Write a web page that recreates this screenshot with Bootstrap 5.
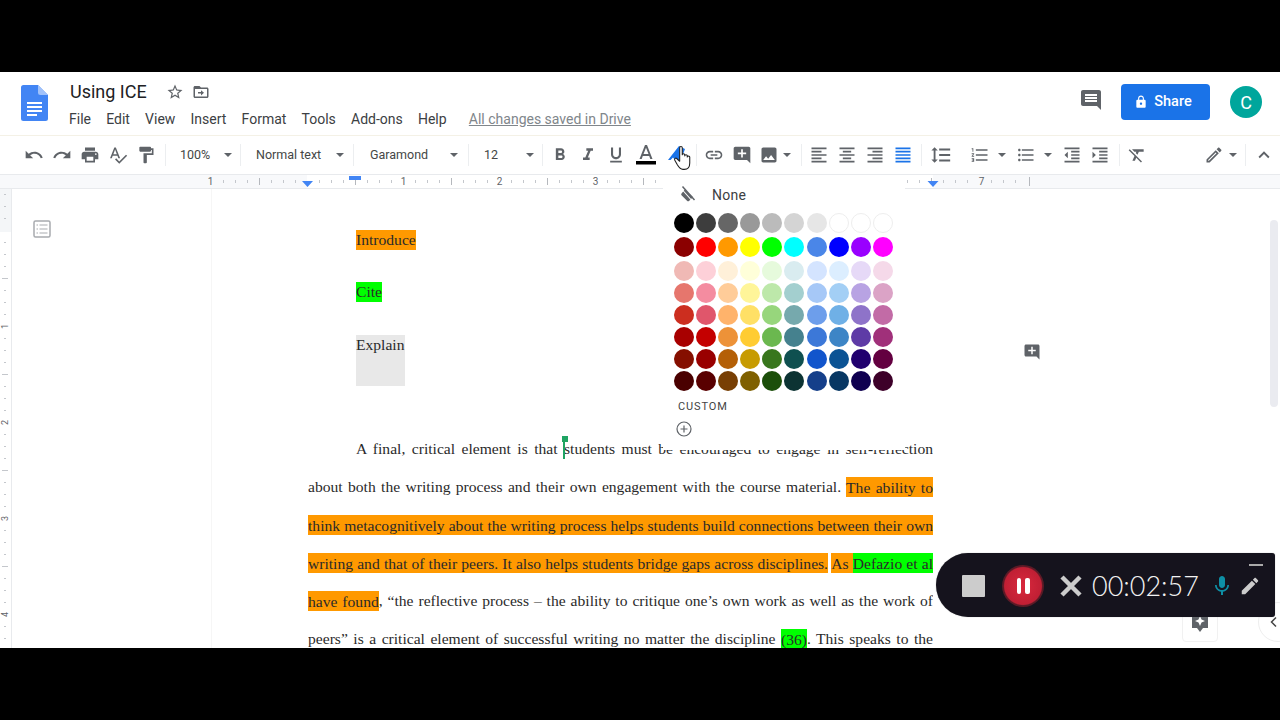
<!DOCTYPE html>
<html lang="en">
<head>
<meta charset="utf-8">
<title>Using ICE</title>
<link href="https://cdn.jsdelivr.net/npm/bootstrap@5.3.0/dist/css/bootstrap.min.css" rel="stylesheet">
<style>
html,body{height:720px;overflow:hidden;background:#000}
body{font-family:Roboto,"Liberation Sans",sans-serif;color:#3c4043}
.barblack{height:72px;background:#000}
.app{height:576px;background:#fff;overflow:hidden;position:relative}
.hdr{height:63px}
.logo-slot{width:69px;padding-left:21px;padding-top:13px}
.doc-title{font-size:18px;line-height:22px;color:#202124;margin-top:9px;padding-left:1px}
.title-ic{margin-left:19px;gap:8px}
.menu-row{margin-top:6px;font-size:14px;line-height:20px;gap:15.2px;color:#3c4043}
.saved{color:#80868b;text-decoration:underline;margin-left:7px}
.hdr-right{padding-right:18px;padding-top:12px}
.share-btn{width:89px;height:36px;background:#1a73e8;border:0;border-radius:4px;color:#fff;font-size:14.5px;font-weight:500;margin:0 20px 0 18px;padding:0 5px 0 0;gap:6px}
.share-btn:hover{background:#1a73e8}
.avatar-c{width:32px;height:32px;background:#00a69c;color:#fff;font-size:18px;margin-top:2px}
.tools{height:40px;padding-left:20px;padding-right:2px;border-top:1px solid #f4f1e6;border-bottom:1px solid #e8eaed;font-size:12.5px;color:#444746}
.slot{width:28px;height:28px}
.sl26{width:26px}.sl10{width:10px}.sl16{width:16px}
.tsep{width:1px;height:22px;background:#eceef0}
.ml1{margin-left:1px}.ml2{margin-left:2px}.ml3{margin-left:3px}.ml4{margin-left:4px}.ml5{margin-left:5px}.ml7{margin-left:7px}.ml9{margin-left:9px}.ml11{margin-left:11px}
.tsel{height:28px}
.ts74{width:74px;padding:0 8px 0 14px}
.ts112{width:112px;padding:0 9px 0 15px}
.ts114{width:114px;padding:0 10px 0 16px}
.ts73{width:73px;padding:0 8px 0 15px}
.caret-d{width:0;height:0;border-left:4px solid transparent;border-right:4px solid transparent;border-top:4px solid #5f6368}
.rule-h{height:14px;background:#f8f9fb;border-bottom:1px solid #e8eaed}
.rule-h svg,.rule-v svg{display:block}
.work{height:459px}
.rule-v{width:12px;border-right:1px solid #e8eaed}
.side{width:199px;padding:31px 0 0 21px}
.page{width:820px;border-left:1px solid #f6f6f6;padding:25px 0 0 96px;font-family:"Liberation Serif",serif;color:#2a2a2a;font-size:15.6px}
.page-in{width:625px}
.shortl{height:52px;padding-left:48px;padding-top:16px;line-height:20px}
.exl{height:69px;padding-top:17px;margin-bottom:43px}
.hi-o{background:#f90}
.hi-g{background:#0f0}
.hi-o,.hi-g{padding:1.5px 0}
.shortl .hi-o,.shortl .hi-g{display:inline-block;padding:0;height:20px;width:auto}
.hi-w{display:inline-block;width:49px;height:51px;background:#e8e8e8;vertical-align:top}
.jline{line-height:38px;height:38px;text-align:justify;text-align-last:justify;overflow:hidden}
.jind{padding-left:48px}
.scrollthumb{position:absolute;left:1270px;top:148px;width:8px;height:187px;background:#eaebf0;border-radius:4px}
.txt-cur{position:absolute;left:563px;top:370px;width:2px;height:17px;background:#1fa463}
.txt-cur::before{content:"";position:absolute;left:-1px;top:-6px;width:6px;height:6px;background:#1fa463}
.pop{position:absolute;left:663px;top:103px;width:242px;height:275px;background:#fff;padding:0 0 0 11px;font-size:14px;color:#3c4043}
.none-row{height:38px;padding-left:4px}
.none-t{margin-left:16px;letter-spacing:.3px;padding-top:2px}
.swgrid{display:grid;grid-template-columns:repeat(10,22.1px);grid-template-rows:24px 24px repeat(6,22.1px)}
.sw{width:20px;height:20px;border-radius:50%;display:block}
.cust{font-size:11px;letter-spacing:.9px;line-height:16px;margin:5px 0 5px 4px;color:#444}
.hand{position:absolute;left:673px;top:73px}
.addc{position:absolute;left:1023px;top:271px}
.explore-b{position:absolute;left:1182px;top:530px;width:36px;height:40px;background:#fff;border:1px solid #f1f1f1;border-radius:0 0 4px 4px;padding-bottom:7px}
.sidechev{position:absolute;left:1258px;top:530px;width:40px;height:40px;border:1px solid #eee;border-radius:50%;background:#fff;padding-left:10px}
.recbar{position:absolute;left:936px;top:481px;width:339px;height:64px;background:#15131d;border-radius:32px 3px 3px 32px;box-shadow:0 0 1px #999;padding-top:2px}
.rstop{width:23px;height:22px;background:#ccc;border-radius:1px;margin-left:26px}
.rpause{width:42px;height:42px;margin-left:17px;background:radial-gradient(circle,#d9283d 0,#c01f34 62%,#5d1a26 66%,#3a1520 100%);gap:4px}
.rbarp{width:4.5px;height:16px;background:#fff;border-radius:2px;display:block}
.rtime{font-family:Lato,Roboto,sans-serif;font-weight:300;font-size:27px;color:#f2f2f2;line-height:60px;margin-left:9px;width:108px;white-space:nowrap}
.rmin{position:absolute;left:313px;top:11px;width:14px;height:1.5px;background:#aaa}
.rx{margin-left:15px}
.rmic{margin-left:10px}
.rpen{margin-left:5px}
</style>
</head>
<body>
<div class="barblack"></div>
<div class="app">
  <div class="hdr d-flex">
    <div class="logo-slot">
      <svg width="27" height="36" viewBox="0 0 27 36"><path fill="#4285f4" d="M2.500 0H17l10 10v23.500A2.500 2.500 0 0 1 24.500 36h-22A2.500 2.500 0 0 1 0 33.500v-31A2.500 2.500 0 0 1 2.500 0z"/><path fill="#a1c2fa" d="M17 0l10 10h-7.500A2.500 2.500 0 0 1 17 7.500z"/><path fill="#fff" d="M6 17h15v2H6zM6 21h15v2H6zM6 25h15v2H6zM6 29h10v2H6z"/></svg>
    </div>
    <div class="flex-grow-1">
      <div class="doc-title d-flex align-items-center">
        <span>Using ICE</span>
        <span class="title-ic d-flex align-items-center">
          <svg width="18" height="18" viewBox="0 0 24 24" fill="#5f6368"><path d="M22 9.240l-7.190-.620L12 2 9.190 8.630 2 9.240l5.460 4.730L5.820 21 12 17.270 18.180 21l-1.630-7.030L22 9.240zM12 15.400l-3.760 2.270 1-4.280-3.320-2.880 4.380-.380L12 6.100l1.710 4.040 4.380.380-3.320 2.880 1 4.280L12 15.400z"/></svg>
          <svg width="18" height="18" viewBox="0 0 24 24" fill="#5f6368"><path d="M20 6h-8l-2-2H4c-1.100 0-1.990.9-1.990 2L2 18c0 1.100.9 2 2 2h16c1.100 0 2-.9 2-2V8c0-1.100-.9-2-2-2zm0 12H4V8h16v10z"/><path d="M12 9.500v2.500H8v2h4v2.500l4-3.500z"/></svg>
        </span>
      </div>
      <div class="menu-row d-flex">
        <span>File</span><span>Edit</span><span>View</span><span>Insert</span><span>Format</span><span>Tools</span><span>Add-ons</span><span>Help</span><span class="saved">All changes saved in Drive</span>
      </div>
    </div>
    <div class="hdr-right d-flex align-items-start">
      <svg class="mt-1" width="24" height="24" viewBox="0 0 24 24" fill="#5f6368"><path d="M21.990 4c0-1.100-.89-2-1.990-2H4c-1.100 0-2 .9-2 2v12c0 1.100.9 2 2 2h14l4 4-.01-18zM18 14H6v-2h12v2zm0-3H6V9h12v2zm0-3H6V6h12v2z"/></svg>
      <button class="btn share-btn d-flex align-items-center justify-content-center">
        <svg width="14" height="14" viewBox="0 0 24 24" fill="#fff"><path d="M18 8h-1V6c0-2.760-2.240-5-5-5S7 3.240 7 6v2H6c-1.100 0-2 .9-2 2v10c0 1.100.9 2 2 2h12c1.100 0 2-.9 2-2V10c0-1.100-.9-2-2-2zm-6 9c-1.100 0-2-.9-2-2s.9-2 2-2 2 .9 2 2-.9 2-2 2zm3.100-9H8.900V6c0-1.710 1.390-3.100 3.100-3.100 1.710 0 3.100 1.390 3.100 3.100v2z"/></svg>
        <span>Share</span>
      </button>
      <div class="avatar-c rounded-circle d-flex align-items-center justify-content-center">C</div>
    </div>
  </div>

  <div class="tools d-flex align-items-center">
    <span class="slot d-flex align-items-center justify-content-center"><svg width="20" height="20" viewBox="0 0 24 24" fill="#5f6368"><path d="M12.500 8c-2.650 0-5.050.99-6.900 2.600L2 7v9h9l-3.620-3.620c1.390-1.160 3.160-1.880 5.120-1.880 3.540 0 6.550 2.310 7.600 5.500l2.370-.78C21.080 11.030 17.150 8 12.500 8z"/></svg></span>
    <span class="slot d-flex align-items-center justify-content-center"><svg width="20" height="20" viewBox="0 0 24 24" fill="#5f6368"><path d="M18.400 10.600C16.550 8.990 14.150 8 11.500 8c-4.650 0-8.580 3.030-9.960 7.220L3.900 16c1.050-3.190 4.050-5.500 7.600-5.500 1.950 0 3.730.72 5.120 1.880L13 16h9V7l-3.600 3.600z"/></svg></span>
    <span class="slot d-flex align-items-center justify-content-center"><svg width="20" height="20" viewBox="0 0 24 24" fill="#5f6368"><path d="M19 8H5c-1.660 0-3 1.340-3 3v6h4v4h12v-4h4v-6c0-1.660-1.340-3-3-3zm-3 11H8v-5h8v5zm3-7c-.55 0-1-.45-1-1s.45-1 1-1 1 .45 1 1-.45 1-1 1zm-1-9H6v4h12V3z"/></svg></span>
    <span class="slot d-flex align-items-center justify-content-center"><svg width="20" height="20" viewBox="0 0 24 24" fill="#5f6368"><path d="M12.450 16h2.090L9.430 3H7.570L2.460 16h2.090l1.120-3h5.640l1.140 3zm-6.020-5L8.500 5.480 10.570 11H6.430zm15.160.59l-8.090 8.090L9.830 16l-1.410 1.410 5.090 5.090L23 13l-1.410-1.410z"/></svg></span>
    <span class="slot d-flex align-items-center justify-content-center"><svg width="20" height="20" viewBox="0 0 24 24" fill="#5f6368"><path d="M18 4V3c0-.55-.45-1-1-1H5c-.55 0-1 .45-1 1v4c0 .55.45 1 1 1h12c.55 0 1-.45 1-1V6h1v4H9v11c0 .55.45 1 1 1h2c.55 0 1-.45 1-1v-9h8V4h-3z"/></svg></span>
    <span class="tsep ml5"></span>
    <span class="tsel ts74 d-flex align-items-center justify-content-between"><span>100%</span><i class="caret-d"></i></span>
    <span class="tsep"></span>
    <span class="tsel ts112 d-flex align-items-center justify-content-between"><span>Normal text</span><i class="caret-d"></i></span>
    <span class="tsep"></span>
    <span class="tsel ts114 d-flex align-items-center justify-content-between"><span>Garamond</span><i class="caret-d"></i></span>
    <span class="tsep"></span>
    <span class="tsel ts73 d-flex align-items-center justify-content-between"><span>12</span><i class="caret-d"></i></span>
    <span class="tsep"></span>
    <span class="slot ml3 d-flex align-items-center justify-content-center"><svg width="20" height="20" viewBox="0 0 24 24" fill="#5f6368"><path d="M15.600 10.790c.97-.67 1.650-1.770 1.650-2.790 0-2.260-1.750-4-4-4H7v14h7.040c2.090 0 3.710-1.700 3.710-3.790 0-1.520-.86-2.820-2.150-3.420zM10 6.500h3c.83 0 1.500.67 1.500 1.500s-.67 1.500-1.500 1.500h-3v-3zm3.500 9H10v-3h3.500c.83 0 1.500.67 1.500 1.500s-.67 1.500-1.500 1.500z"/></svg></span>
    <span class="slot d-flex align-items-center justify-content-center"><svg width="20" height="20" viewBox="0 0 24 24" fill="#5f6368"><path d="M10 4v3h2.210l-3.420 8H6v3h8v-3h-2.210l3.420-8H18V4z"/></svg></span>
    <span class="slot d-flex align-items-center justify-content-center"><svg width="20" height="20" viewBox="0 0 24 24" fill="#5f6368"><path d="M12 17c3.310 0 6-2.690 6-6V3h-2.500v8c0 1.930-1.570 3.500-3.500 3.500S8.500 12.930 8.500 11V3H6v8c0 3.310 2.690 6 6 6zm-7 2v2h14v-2H5z"/></svg></span>
    <span class="slot ml2 d-flex align-items-center justify-content-center"><svg width="24" height="24" viewBox="0 0 24 24"><path fill="#5f6368" d="M11 2h2l5.500 14h-2.200l-1.100-3H8.800l-1.100 3H5.500L11 2zm1 2.800L9.500 11h5L12 4.800z"/><rect x="2" y="18" width="20" height="3.500" fill="#000"/></svg></span>
    <span class="slot ml4 d-flex align-items-center justify-content-center"><svg width="24" height="24" viewBox="0 0 24 24" fill="#1a73e8"><path d="M2 17L13 3l6 3-4 11H9l-2-2.500L4.500 17z"/></svg></span>
    <span class="tsep ml4"></span>
    <span class="slot ml3 d-flex align-items-center justify-content-center"><svg width="20" height="20" viewBox="0 0 24 24" fill="#5f6368"><path d="M3.900 12c0-1.710 1.390-3.100 3.100-3.100h4V7H7c-2.760 0-5 2.240-5 5s2.240 5 5 5h4v-1.900H7c-1.710 0-3.100-1.390-3.100-3.100zM8 13h8v-2H8v2zm9-6h-4v1.900h4c1.710 0 3.100 1.390 3.100 3.100s-1.390 3.100-3.100 3.100h-4V17h4c2.760 0 5-2.240 5-5s-2.240-5-5-5z"/></svg></span>
    <span class="slot d-flex align-items-center justify-content-center"><svg width="20" height="20" viewBox="0 0 24 24" fill="#5f6368"><path d="M21.990 4c0-1.100-.89-2-1.990-2H4c-1.100 0-2 .9-2 2v12c0 1.100.9 2 2 2h14l4 4-.01-18zM17 11h-4v4h-2v-4H7V9h4V5h2v4h4v2z"/></svg></span>
    <span class="slot sl26 d-flex align-items-center justify-content-center"><svg width="20" height="20" viewBox="0 0 24 24" fill="#5f6368"><path d="M21 19V5c0-1.100-.9-2-2-2H5c-1.100 0-2 .9-2 2v14c0 1.100.9 2 2 2h14c1.100 0 2-.9 2-2zM8.500 13.500l2.500 3.010L14.500 12l4.500 6H5l3.500-4.500z"/></svg></span>
    <span class="slot sl10 d-flex align-items-center justify-content-center"><i class="caret-d"></i></span>
    <span class="tsep ml9"></span>
    <span class="slot ml3 d-flex align-items-center justify-content-center"><svg width="20" height="20" viewBox="0 0 24 24" fill="#5f6368"><path d="M15 15H3v2h12v-2zm0-8H3v2h12V7zM3 13h18v-2H3v2zm0 8h18v-2H3v2zM3 3v2h18V3H3z"/></svg></span>
    <span class="slot d-flex align-items-center justify-content-center"><svg width="20" height="20" viewBox="0 0 24 24" fill="#5f6368"><path d="M7 15v2h10v-2H7zm-4 6h18v-2H3v2zm0-8h18v-2H3v2zm4-6v2h10V7H7zM3 3v2h18V3H3z"/></svg></span>
    <span class="slot d-flex align-items-center justify-content-center"><svg width="20" height="20" viewBox="0 0 24 24" fill="#5f6368"><path d="M3 21h18v-2H3v2zm6-4h12v-2H9v2zm-6-4h18v-2H3v2zm6-4h12V7H9v2zM3 3v2h18V3H3z"/></svg></span>
    <span class="slot d-flex align-items-center justify-content-center"><svg width="20" height="20" viewBox="0 0 24 24" fill="#1a73e8"><path d="M3 21h18v-2H3v2zm0-4h18v-2H3v2zm0-4h18v-2H3v2zm0-4h18V7H3v2zm0-6v2h18V3H3z"/></svg></span>
    <span class="tsep ml4"></span>
    <span class="slot ml5 d-flex align-items-center justify-content-center"><svg width="22" height="22" viewBox="0 0 24 24" fill="#5f6368"><path d="M6 7h2.500L5 3.500 1.500 7H4v10H1.500L5 20.500 8.500 17H6V7zm4-2v2h12V5H10zm0 14h12v-2H10v2zm0-6h12v-2H10v2z"/></svg></span>
    <span class="slot ml11 d-flex align-items-center justify-content-center"><svg width="20" height="20" viewBox="0 0 24 24" fill="#5f6368"><path d="M2 17h2v.5H3v1h1v.5H2v1h3v-4H2v1zm1-9h1V4H2v1h1v3zm-1 3h1.800L2 13.100v.9h3v-1H3.200L5 10.900V10H2v1zm5-6v2h14V5H7zm0 14h14v-2H7v2zm0-6h14v-2H7v2z"/></svg></span>
    <span class="slot sl16 d-flex align-items-center justify-content-center"><i class="caret-d"></i></span>
    <span class="slot ml2 d-flex align-items-center justify-content-center"><svg width="20" height="20" viewBox="0 0 24 24" fill="#5f6368"><path d="M4 10.500c-.83 0-1.500.67-1.500 1.500s.67 1.500 1.500 1.500 1.500-.67 1.500-1.500-.67-1.500-1.500-1.500zm0-6c-.83 0-1.500.67-1.500 1.500S3.170 7.500 4 7.500 5.500 6.830 5.500 6 4.830 4.500 4 4.500zm0 12c-.83 0-1.500.68-1.500 1.500s.68 1.500 1.500 1.500 1.500-.68 1.500-1.500-.67-1.500-1.500-1.500zM7 19h14v-2H7v2zm0-6h14v-2H7v2zm0-8v2h14V5H7z"/></svg></span>
    <span class="slot sl16 d-flex align-items-center justify-content-center"><i class="caret-d"></i></span>
    <span class="slot ml2 d-flex align-items-center justify-content-center"><svg width="20" height="20" viewBox="0 0 24 24" fill="#5f6368"><path d="M11 17h10v-2H11v2zm-8-5l4 4V8l-4 4zm0 9h18v-2H3v2zM3 3v2h18V3H3zm8 6h10V7H11v2zm0 4h10v-2H11v2z"/></svg></span>
    <span class="slot d-flex align-items-center justify-content-center"><svg width="20" height="20" viewBox="0 0 24 24" fill="#5f6368"><path d="M3 21h18v-2H3v2zM3 8v8l4-4-4-4zm8 9h10v-2H11v2zM3 3v2h18V3H3zm8 6h10V7H11v2zm0 4h10v-2H11v2z"/></svg></span>
    <span class="tsep ml5"></span>
    <span class="slot ml3 d-flex align-items-center justify-content-center"><svg width="20" height="20" viewBox="0 0 24 24" fill="#5f6368"><path d="M3.270 5L2 6.270l6.970 6.970L6.500 19h3l1.570-3.660L16.730 21 18 19.730 3.550 5.270 3.270 5zM6 5v.18L8.820 8h2.400l-.72 1.680 2.100 2.100L14.210 8H20V5H6z"/></svg></span>
    <span class="slot ms-auto d-flex align-items-center justify-content-center"><svg width="20" height="20" viewBox="0 0 24 24" fill="#5f6368"><path d="M3 17.250V21h3.750L17.810 9.940l-3.750-3.750L3 17.250zM5.920 19H5v-.92l9.060-9.060.92.92L5.920 19zM20.710 7.040c.39-.39.39-1.020 0-1.410l-2.340-2.340c-.39-.39-1.020-.39-1.410 0l-1.830 1.830 3.750 3.750 1.830-1.830z"/></svg></span>
    <span class="slot sl10 d-flex align-items-center justify-content-center"><i class="caret-d"></i></span>
    <span class="tsep ml7"></span>
    <span class="slot ml4 d-flex align-items-center justify-content-center"><svg width="22" height="22" viewBox="0 0 24 24" fill="#5f6368"><path d="M7.410 15.410L12 10.830l4.590 4.580L18 14l-6-6-6 6z"/></svg></span>
  </div>

  <div class="rule-h">
    <svg width="1280" height="13" viewBox="0 0 1280 13">
      <defs><pattern id="tk" x="211" y="0" width="96" height="13" patternUnits="userSpaceOnUse"><path stroke="#c4c7cc" d="M12.500 5v3M24.500 5v3M36.500 5v3M60.500 5v3M72.500 5v3M84.500 5v3"/><path stroke="#b5b8bd" d="M48.500 3v7"/></pattern></defs>
      <rect x="307" y="0" width="626" height="13" fill="#fff"/>
      <rect x="212" y="0" width="810" height="13" fill="url(#tk)"/>
      <path stroke="#b5b8bd" d="M1029.500 2v9"/>
      <g font-family="Roboto,sans-serif" font-size="10" fill="#5f6368" text-anchor="middle"><text x="210.500" y="10">1</text><text x="403.500" y="10">1</text><text x="499.500" y="10">2</text><text x="595.500" y="10">3</text><text x="981.500" y="10">7</text></g>
      <path fill="#4285f4" d="M302 6h11l-5.500 6zM349 1h12v4h-12zM927.500 6h11l-5.500 6z"/>
    </svg>
  </div>

  <div class="work d-flex">
    <div class="rule-v">
      <svg width="11" height="459" viewBox="0 0 11 459">
        <rect width="11" height="43" fill="#f4f6f8"/>
        <path stroke="#c4c7cc" d="M4 5.500h2M4 17.500h2M4 29.500h2M4 53.500h2M4 65.500h2M4 77.500h2M2 89.500h6M4 101.500h2M4 113.500h2M4 125.500h2M4 149.500h2M4 161.500h2M4 173.500h2M2 185.500h6M4 197.500h2M4 209.500h2M4 221.500h2M4 245.500h2M4 257.500h2M4 269.500h2M2 281.500h6M4 293.500h2M4 305.500h2M4 317.500h2M4 341.500h2M4 353.500h2M4 365.500h2M2 377.500h6M4 389.500h2M4 401.500h2M4 413.500h2M4 437.500h2M4 449.500h2"/>
        <g font-family="Roboto,sans-serif" font-size="9" fill="#5f6368" text-anchor="middle"><text transform="translate(8 137.500) rotate(-90)">1</text><text transform="translate(8 233.500) rotate(-90)">2</text><text transform="translate(8 329.500) rotate(-90)">3</text><text transform="translate(8 425.500) rotate(-90)">4</text></g>
      </svg>
    </div>
    <div class="side">
      <svg class="d-block" width="18" height="18" viewBox="0 0 18 18" fill="none" stroke="#a8abaf"><rect x="1" y="1" width="16" height="16" rx="1.500" stroke-width="1.500"/><path d="M6.500 5h8M6.500 9h8M6.500 13h8M3.500 5h1.500M3.500 9h1.500M3.500 13h1.500"/></svg>
    </div>
    <div class="page">
      <div class="page-in">
        <div class="shortl"><span class="hi-o">Introduce</span></div>
        <div class="shortl"><span class="hi-g">Cite</span></div>
        <div class="shortl exl"><span class="hi-w">Explain</span></div>
        <div class="jline jind">A final, critical element is that students must be encouraged to engage in self-reflection</div>
        <div class="jline">about both the writing process and their own engagement with the course material. <span class="hi-o">The ability to</span></div>
        <div class="jline"><span class="hi-o">think metacognitively about the writing process helps students build connections between their own</span></div>
        <div class="jline"><span class="hi-o">writing and that of their peers. It also helps students bridge gaps across disciplines.</span> <span class="hi-o">As </span><span class="hi-g">Defazio et al</span></div>
        <div class="jline"><span class="hi-o">have found</span>, “the reflective process – the ability to critique one’s own work as well as the work of</div>
        <div class="jline">peers” is a critical element of successful writing no matter the discipline <span class="hi-g">(36)</span>. This speaks to the</div>
      </div>
    </div>
  </div>

  <div class="scrollthumb"></div>
  <div class="txt-cur"></div>

  <div class="pop">
    <div class="none-row d-flex align-items-center">
      <svg width="18" height="18" viewBox="0 0 24 24"><path fill="#5f6368" d="M9 6l11 10-5 5c-1 1-2 1-3 0l-7-7c-1-1-1-2 0-3z"/><path stroke="#5f6368" stroke-width="2" d="M6 2l16 18"/><path stroke="#fff" stroke-width="1.500" d="M4.500 5l16 18"/></svg>
      <span class="none-t">None</span>
    </div>
    <div class="swgrid">
      <i class="sw sa0"></i><i class="sw sa1"></i><i class="sw sa2"></i><i class="sw sa3"></i><i class="sw sa4"></i><i class="sw sa5"></i><i class="sw sa6"></i><i class="sw sa7"></i><i class="sw sa7"></i><i class="sw sa7"></i>
      <i class="sw sb0"></i><i class="sw sb1"></i><i class="sw sb2"></i><i class="sw sb3"></i><i class="sw sb4"></i><i class="sw sb5"></i><i class="sw sb6"></i><i class="sw sb7"></i><i class="sw sb8"></i><i class="sw sb9"></i>
      <i class="sw sc0"></i><i class="sw sc1"></i><i class="sw sc2"></i><i class="sw sc3"></i><i class="sw sc4"></i><i class="sw sc5"></i><i class="sw sc6"></i><i class="sw sc7"></i><i class="sw sc8"></i><i class="sw sc9"></i>
      <i class="sw sd0"></i><i class="sw sd1"></i><i class="sw sd2"></i><i class="sw sd3"></i><i class="sw sd4"></i><i class="sw sd5"></i><i class="sw sd6"></i><i class="sw sd7"></i><i class="sw sd8"></i><i class="sw sd9"></i>
      <i class="sw se0"></i><i class="sw se1"></i><i class="sw se2"></i><i class="sw se3"></i><i class="sw se4"></i><i class="sw se5"></i><i class="sw se6"></i><i class="sw se7"></i><i class="sw se8"></i><i class="sw se9"></i>
      <i class="sw sf0"></i><i class="sw sf1"></i><i class="sw sf2"></i><i class="sw sf3"></i><i class="sw sf4"></i><i class="sw sf5"></i><i class="sw sf6"></i><i class="sw sf7"></i><i class="sw sf8"></i><i class="sw sf9"></i>
      <i class="sw sg0"></i><i class="sw sg1"></i><i class="sw sg2"></i><i class="sw sg3"></i><i class="sw sg4"></i><i class="sw sg5"></i><i class="sw sg6"></i><i class="sw sg7"></i><i class="sw sg8"></i><i class="sw sg9"></i>
      <i class="sw sh0"></i><i class="sw sh1"></i><i class="sw sh2"></i><i class="sw sh3"></i><i class="sw sh4"></i><i class="sw sh5"></i><i class="sw sh6"></i><i class="sw sh7"></i><i class="sw sh8"></i><i class="sw sh9"></i>
    </div>
    <div class="cust">CUSTOM</div>
    <svg class="d-block ml1" width="18" height="18" viewBox="0 0 18 18" fill="none" stroke="#5f6368" stroke-width="1.200"><circle cx="9" cy="9" r="7"/><path d="M9 5.500v7M5.500 9h7"/></svg>
  </div>

  <svg class="hand" width="22" height="26" viewBox="0 0 20 24"><path fill="#fff" stroke="#222" stroke-width="1" stroke-linejoin="round" d="M6 2.500c0-1.500 2.400-1.500 2.400 0V9c0-1.300 2.300-1.300 2.300 0v1c0-1.300 2.300-1.300 2.300 0v1c0-1.200 2.300-1.200 2.300 0v5.500c0 3-1.500 6-5 6H9c-2.500 0-3.500-1.500-5-4L1.500 14c-.8-1.500 1-2.500 2-1.300L6 15z"/></svg>

  <svg class="addc" width="18" height="18" viewBox="0 0 24 24" fill="#5f6368"><path d="M21.990 4c0-1.100-.89-2-1.990-2H4c-1.100 0-2 .9-2 2v12c0 1.100.9 2 2 2h14l4 4-.01-18zM17 11h-4v4h-2v-4H7V9h4V5h2v4h4v2z"/></svg>

  <div class="explore-b d-flex align-items-end justify-content-center"><svg width="20" height="22" viewBox="0 0 20 22"><path fill="#5f6368" d="M2 2h16v14h-5l-3 4-3-4H2z"/><path fill="#fff" d="M10 4l1.500 3.500L15 9l-3.500 1.500L10 14l-1.500-3.500L5 9l3.500-1.500z"/></svg></div>
  <div class="sidechev d-flex align-items-center"><svg width="10" height="12" viewBox="0 0 10 12" fill="none" stroke="#444" stroke-width="1.500"><path d="M7 1.500L2.500 6 7 10.500"/></svg></div>

  <div class="recbar d-flex align-items-center">
    <span class="rstop"></span>
    <span class="rpause rounded-circle d-flex align-items-center justify-content-center"><i class="rbarp"></i><i class="rbarp"></i></span>
    <svg class="rx" width="24" height="24" viewBox="0 0 24 24" fill="none" stroke="#ccc" stroke-width="4.500"><path d="M3 3l18 18M21 3L3 21"/></svg>
    <span class="rtime">00:02:57</span>
    <svg class="rmic" width="24" height="26" viewBox="0 0 24 24" fill="#0e8fa5"><path d="M12 14c1.660 0 2.990-1.340 2.990-3L15 5c0-1.660-1.340-3-3-3S9 3.340 9 5v6c0 1.660 1.340 3 3 3zm5.300-3c0 3-2.540 5.100-5.300 5.100S6.700 14 6.700 11H5c0 3.410 2.720 6.230 6 6.720V21h2v-3.280c3.280-.48 6-3.300 6-6.720h-1.700z"/></svg>
    <svg class="rpen" width="22" height="22" viewBox="0 0 24 24" fill="#ccc"><path d="M3 17.250V21h3.750L17.810 9.940l-3.750-3.750L3 17.250zM20.710 7.040c.39-.39.39-1.020 0-1.410l-2.340-2.340c-.39-.39-1.020-.39-1.410 0l-1.830 1.830 3.750 3.750 1.830-1.830z"/></svg>
    <span class="rmin"></span>
  </div>
</div>
<div class="barblack"></div>
<style>
.sa0{background:#000}.sa1{background:#3d3d3d}.sa2{background:#666}.sa3{background:#999}.sa4{background:#bbb}.sa5{background:#d4d4d4}.sa6{background:#e6e6e6}.sa7{background:#fff;border:1px solid #eee}
.sb0{background:#8b0000}.sb1{background:#f00}.sb2{background:#f90}.sb3{background:#ff0}.sb4{background:#0f0}.sb5{background:#0ff}.sb6{background:#4a86e8}.sb7{background:#00f}.sb8{background:#90f}.sb9{background:#f0f}
.sc0{background:#f0b9b5}.sc1{background:#fdd0d8}.sc2{background:#fff0d9}.sc3{background:#ffffd9}.sc4{background:#e6fadc}.sc5{background:#d9ecf0}.sc6{background:#d4e4ff}.sc7{background:#dceeff}.sc8{background:#e6d9f7}.sc9{background:#f5d9e9}
.sd0{background:#e6766d}.sd1{background:#f48ca0}.sd2{background:#fc9}.sd3{background:#fff599}.sd4{background:#bde8aa}.sd5{background:#a3cfcf}.sd6{background:#a6c8f7}.sd7{background:#a3cff5}.sd8{background:#b8a3e3}.sd9{background:#dba3c6}
.se0{background:#cc2e1f}.se1{background:#e0566b}.se2{background:#ffb36b}.se3{background:#ffe066}.se4{background:#97d67c}.se5{background:#76a9ad}.se6{background:#6d9eeb}.se7{background:#6fb0e6}.se8{background:#8e73c9}.se9{background:#c26ba6}
.sf0{background:#a80000}.sf1{background:#c40000}.sf2{background:#ed9238}.sf3{background:#fc3}.sf4{background:#6bb84f}.sf5{background:#45818e}.sf6{background:#3c78d8}.sf7{background:#3d85c6}.sf8{background:#5e3ba6}.sf9{background:#a0307a}
.sg0{background:#850f00}.sg1{background:#900}.sg2{background:#b45f06}.sg3{background:#c79b00}.sg4{background:#38761d}.sg5{background:#0f5050}.sg6{background:#15c}.sg7{background:#0b5394}.sg8{background:#20006e}.sg9{background:#630040}
.sh0{background:#4a0000}.sh1{background:#590000}.sh2{background:#783f04}.sh3{background:#7f6000}.sh4{background:#1c4f0a}.sh5{background:#0c3333}.sh6{background:#153f8a}.sh7{background:#073763}.sh8{background:#0f0050}.sh9{background:#3d0029}
</style>
<script src="https://cdn.jsdelivr.net/npm/bootstrap@5.3.0/dist/js/bootstrap.bundle.min.js"></script>
</body>
</html>
